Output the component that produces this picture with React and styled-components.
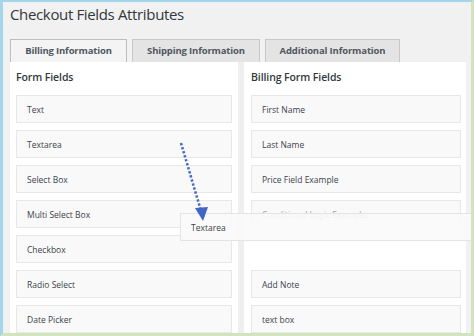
import React from 'react';
import styled, { createGlobalStyle } from 'styled-components';

const GlobalStyle = createGlobalStyle`
  html, body {
    margin: 0;
    padding: 0;
    background: #f1f1f1;
  }
  * {
    box-sizing: border-box;
  }
`;

const Frame = styled.div`
  position: relative;
  width: 474px;
  height: 336px;
  overflow: hidden;
  display: flex;
  flex-direction: column;
  background: #f1f1f1;
  border-left: 3px solid #a3d6ec;
  border-top: 2px solid #a3d6ec;
  border-right: 3px solid #d0e4bd;
  border-bottom: 3px solid #d0e4bd;
  padding: 0 5px 0 7px;
  font-family: 'Open Sans', 'Noto Sans', sans-serif;
  color: #3c434a;
`;

const Title = styled.h1`
  margin: 1px 0 0 0;
  font-size: 15px;
  font-weight: 400;
  line-height: 22px;
  color: #32373c;
  letter-spacing: -0.35px;
`;

const TabBar = styled.div`
  display: flex;
  gap: 5px;
  margin-top: 14px;
  height: 23px;
`;

const Tab = styled.div`
  height: 23px;
  width: ${(p) => p.w}px;
  display: flex;
  align-items: center;
  justify-content: center;
  padding-bottom: 2px;
  border: 1px solid ${(p) => (p.active ? '#bdbdbd' : '#c8c8c8')};
  border-bottom: none;
  background: ${(p) => (p.active ? '#f4f4f4' : '#e4e4e4')};
  font-size: 9.5px;
  font-weight: 700;
  color: #50575e;
  letter-spacing: -0.15px;
`;

const Panel = styled.div`
  flex: 1;
  display: flex;
  background: #ffffff;
`;

const Column = styled.div`
  width: ${(p) => (p.w ? `${p.w}px` : 'auto')};
  flex: ${(p) => (p.w ? 'none' : '1')};
  background: #ffffff;
  padding: 0 ${(p) => p.pr}px 0 ${(p) => p.pl}px;
  display: flex;
  flex-direction: column;
`;

const Divider = styled.div`
  width: 6px;
  background: #efefef;
`;

const ColumnTitle = styled.h2`
  margin: 0;
  height: 33px;
  padding-top: 8px;
  font-size: 10.5px;
  font-weight: 600;
  line-height: 14px;
  color: #32373c;
  letter-spacing: -0.1px;
`;

const List = styled.div`
  display: flex;
  flex-direction: column;
  gap: 7px;
`;

const Item = styled.div`
  height: 28px;
  display: flex;
  align-items: center;
  padding-left: 10px;
  background: #f9f9f9;
  border: 1px solid #e8e8e8;
  font-size: 8.5px;
  color: ${(p) => (p.faded ? '#a0a5aa' : '#3c434a')};
  white-space: nowrap;
`;

const Placeholder = styled.div`
  height: 28px;
`;

const Ghost = styled.div`
  position: absolute;
  left: 177px;
  top: 211px;
  width: 310px;
  height: 28px;
  display: flex;
  align-items: center;
  padding-left: 10px;
  background: rgba(249, 249, 249, 0.9);
  border: 1px solid #e4e4e4;
  font-size: 8.5px;
  color: #3c434a;
`;

const Arrow = styled.svg`
  position: absolute;
  left: 167px;
  top: 133px;
  overflow: visible;
`;

const formFields = [
  'Text',
  'Textarea',
  'Select Box',
  'Multi Select Box',
  'Checkbox',
  'Radio Select',
  'Date Picker',
];

const App = () => {
  return (
    <>
      <GlobalStyle />
      <Frame>
        <Title>Checkout Fields Attributes</Title>
        <TabBar>
          <Tab active w={117}>Billing Information</Tab>
          <Tab w={128}>Shipping Information</Tab>
          <Tab w={135}>Additional Information</Tab>
        </TabBar>
        <Panel>
          <Column w={228} pl={6} pr={6}>
            <ColumnTitle>Form Fields</ColumnTitle>
            <List>
              {formFields.map((f) => (
                <Item key={f}>{f}</Item>
              ))}
            </List>
          </Column>
          <Divider />
          <Column pl={7} pr={5}>
            <ColumnTitle>Billing Form Fields</ColumnTitle>
            <List>
              <Item>First Name</Item>
              <Item>Last Name</Item>
              <Item>Price Field Example</Item>
              <Item faded>Conditional Logic Example:</Item>
              <Placeholder />
              <Item>Add Note</Item>
              <Item>text box</Item>
            </List>
          </Column>
        </Panel>
        <Ghost>Textarea</Ghost>
        <Arrow width="50" height="90" viewBox="0 0 50 90">
          <line
            x1="11"
            y1="8"
            x2="31"
            y2="76"
            stroke="#4a6dc8"
            strokeWidth="2.6"
            strokeDasharray="2.4 1.8"
          />
          <polygon points="25,73 38,72 33,86" fill="#3f66c4" />
        </Arrow>
      </Frame>
    </>
  );
};

export default App;
